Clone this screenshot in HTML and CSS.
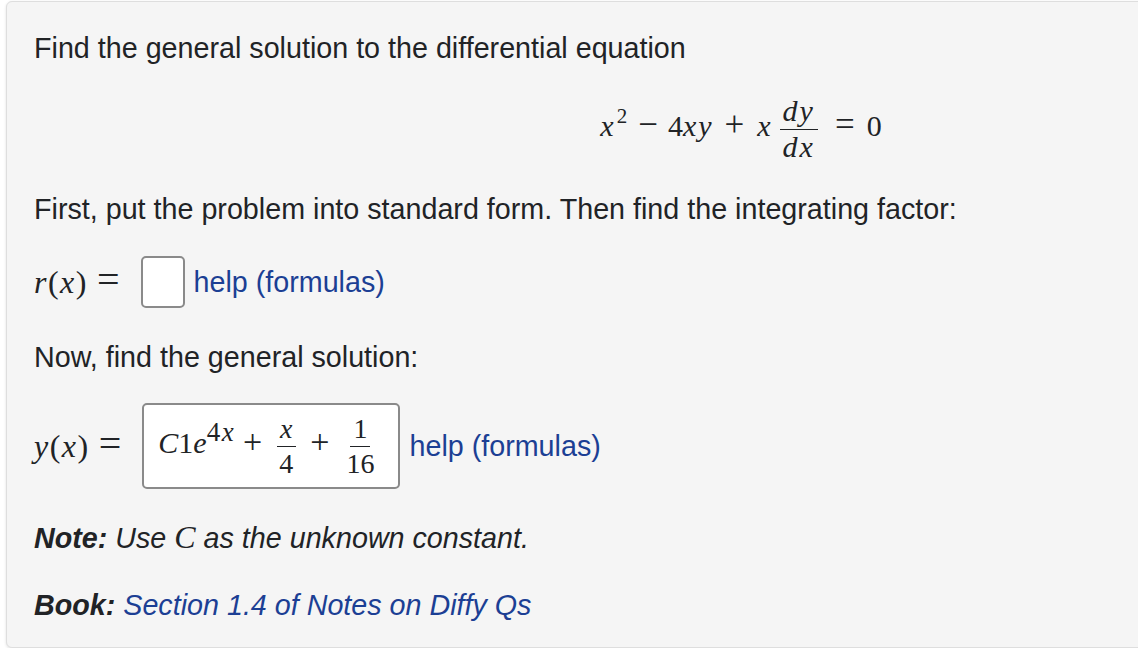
FILE: index.html
```html
<!DOCTYPE html>
<html>
<head>
<meta charset="utf-8">
<link rel="stylesheet" href="styles.css">
</head>
<body>
<div class="problem">
  <p class="line first">Find the general solution to the differential equation</p>
  <div class="display">
    <span class="math eq"><i>x</i><sup class="sup">2</sup><span class="op minus">−</span>4<i>x</i><i>y</i><span class="op plus">+</span><i>x</i><span class="frac eqfrac"><span class="num"><i>d</i><i>y</i></span><span class="den"><i>d</i><i>x</i></span></span><span class="op rel">=</span>0</span>
  </div>
  <p class="line after-display">First, put the problem into standard form. Then find the integrating factor:</p>
  <div class="answer-row row-r">
    <span class="math lhs"><i>r</i>(<i>x</i>)<span class="lrel">=</span></span>
    <span class="ans-box blank"></span>
    <a class="help" href="#">help (formulas)</a>
  </div>
  <p class="line now">Now, find the general solution:</p>
  <div class="answer-row row-y">
    <span class="math lhs"><i>y</i>(<i>x</i>)<span class="lrel">=</span></span>
    <span class="ans-box filled">
      <span class="mq"><i>C</i>1<i>e</i><sup class="exp">4<i>x</i></sup><span class="mop first-op">+</span><span class="frac mqfrac"><span class="num"><i>x</i></span><span class="den">4</span></span><span class="mop">+</span><span class="frac mqfrac"><span class="num">1</span><span class="den">16</span></span></span>
    </span>
    <a class="help" href="#">help (formulas)</a>
  </div>
  <p class="line note"><b>Note:</b> Use <span class="mathc">C</span> as the unknown constant.</p>
  <p class="line book"><b>Book:</b> <a class="booklink" href="#">Section 1.4 of Notes on Diffy Qs</a></p>
</div>
</body>
</html>
```

FILE: styles.css
```css
html, body {
  margin: 0;
  padding: 0;
  background: #ffffff;
  overflow: hidden;
}

body {
  font-family: "Liberation Sans", Arial, sans-serif;
  color: #212326;
}

.problem {
  margin-left: 6px;
  margin-top: 1px;
  width: 1414px;
  padding: 28px 27px 24px 27px;
  background: #f5f5f5;
  border: 1px solid #dedede;
  border-radius: 6px;
  box-shadow: 0 1px 3px rgba(0, 0, 0, 0.12);
}

.line {
  margin: 0;
  font-size: 28.7px;
  line-height: 36px;
}

.display {
  margin-top: 23px;
  height: 80px;
  display: flex;
  justify-content: center;
  align-items: center;
}

.math {
  font-family: "Liberation Serif", "Times New Roman", serif;
  font-size: 30px;
  white-space: nowrap;
}

.math i, .mq i, .mathc {
  font-style: italic;
}

.eq i {
  letter-spacing: 2px;
}

.sup {
  font-size: 21px;
  vertical-align: 13px;
  line-height: 0;
  margin-left: 1px;
  font-style: normal;
}

.op {
  font-size: 35px;
  font-style: normal;
  line-height: 0;
}

.minus {
  margin: 0 10px 0 11px;
}

.plus {
  margin: 0 13px 0 11px;
}

.rel {
  margin: 0 12px 0 17px;
}

.frac {
  display: inline-flex;
  flex-direction: column;
  align-items: center;
  vertical-align: middle;
}

.frac .num {
  border-bottom: 1.5px solid #212326;
  line-height: 1.15;
}

.frac .den {
  line-height: 1.15;
}

.eqfrac {
  margin-left: 7px;
}

.eqfrac .num, .eqfrac .den {
  padding: 0 3px;
}

.after-display {
  margin-top: 22px;
}

.answer-row {
  display: flex;
  align-items: center;
}

.row-r {
  margin-top: 29px;
  height: 52px;
}

.row-y {
  margin-top: 28px;
  height: 86px;
}

.lhs {
  font-size: 32px;
  letter-spacing: 1.5px;
  display: inline-flex;
  align-items: baseline;
}

.lrel {
  font-size: 40px;
  letter-spacing: 0;
  margin: 0 21px 0 9px;
  line-height: 0;
}

.ans-box {
  box-sizing: border-box;
  background: #ffffff;
  border: 2px solid #8a8a8a;
  border-radius: 5px;
}

.blank {
  width: 44px;
  height: 52px;
}

.filled {
  height: 86px;
  display: flex;
  align-items: center;
  padding: 0 21px 0 14px;
}

.mq {
  font-family: "Liberation Serif", "Times New Roman", serif;
  font-size: 30px;
  white-space: nowrap;
}

.exp {
  font-size: 27px;
  letter-spacing: 1.5px;
  vertical-align: 12px;
  line-height: 0;
}

.mop {
  font-size: 34px;
  line-height: 0;
  margin: 0 14px;
}

.first-op {
  margin-left: 8px;
}

.mqfrac {
  font-size: 28px;
}

.mqfrac .num, .mqfrac .den {
  padding: 0 3px;
  line-height: 1.2;
}

.help {
  color: #1c3f94;
  text-decoration: none;
  font-size: 28.7px;
  margin-left: 9px;
}

.now {
  margin-top: 31px;
}

.note {
  margin-top: 31px;
  font-style: italic;
}

.book {
  margin-top: 31px;
  font-style: italic;
}

.mathc {
  font-family: "Liberation Serif", "Times New Roman", serif;
  font-size: 32px;
  line-height: 0;
}

.booklink {
  color: #1c3f94;
  text-decoration: none;
}
```
